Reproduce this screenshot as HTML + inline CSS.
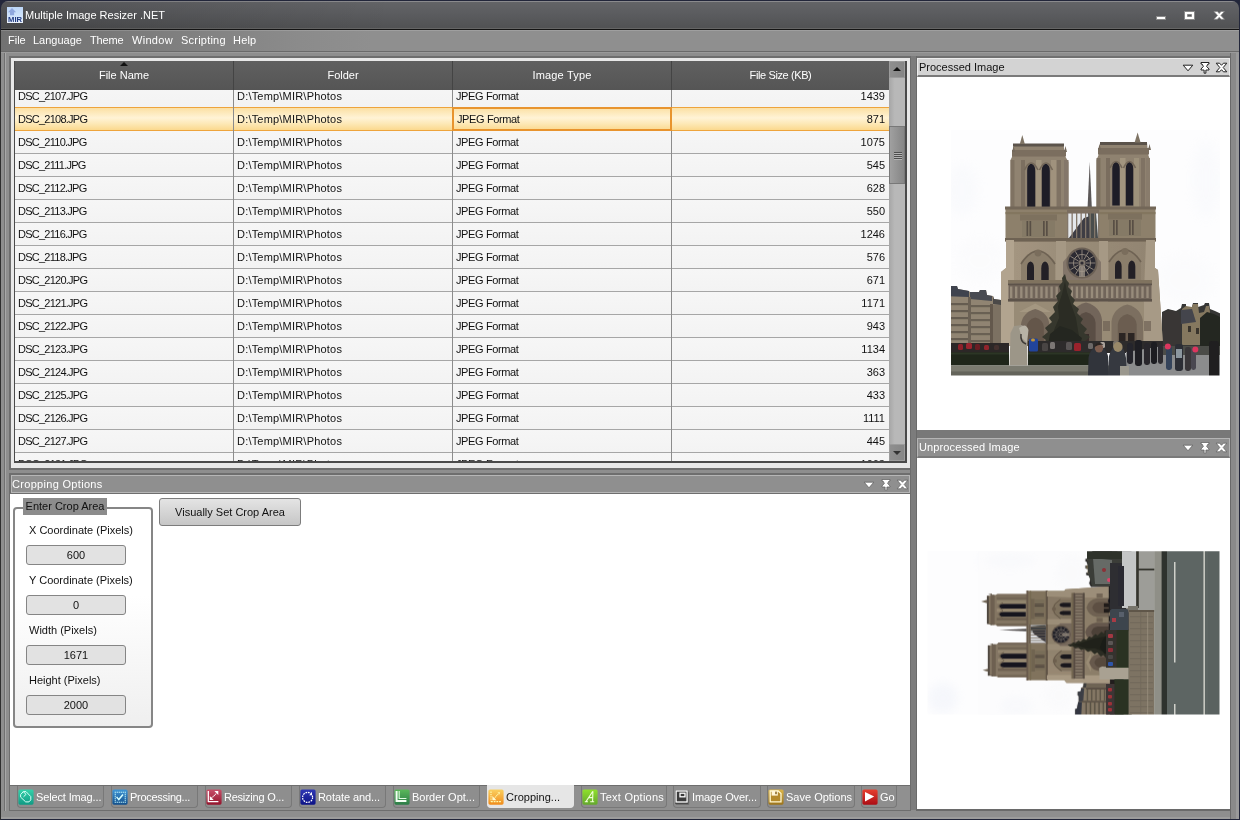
<!DOCTYPE html>
<html><head><meta charset="utf-8"><title>Multiple Image Resizer .NET</title>
<style>
*{box-sizing:border-box;margin:0;padding:0}
html,body{width:1240px;height:820px;overflow:hidden;background:#22263a;}
body{font-family:"Liberation Sans",sans-serif;font-size:11px;color:#111;position:relative}
#win{position:absolute;left:0;top:0;width:1240px;height:820px;overflow:hidden;will-change:transform}
#win div,#win svg{position:absolute}
/* title bar */
#titlebar{left:1px;top:1px;width:1238px;height:28px;border-radius:7px 7px 0 0;background:linear-gradient(90deg,rgba(0,0,0,.16) 0,rgba(0,0,0,.1) 10%,rgba(0,0,0,0) 32%),linear-gradient(#8a8a8d 0,#8a8a8d 1px,#636467 1px,#5c5d60 40%,#515254 27px,#656565 27px);}
#tline{left:1px;top:29px;width:1238px;height:1px;background:#141414}
#appicon{left:7px;top:7px;width:16px;height:16px}
#title{left:25px;top:8px;height:15px;line-height:15px;font-size:11px;color:#fff;white-space:nowrap;letter-spacing:0}
#wctl{left:1155px;top:10px}
/* menu */
#menubar{left:1px;top:30px;width:1238px;height:21px;background:linear-gradient(90deg,#727272 0,#787878 8%,#8b8b8b 24%,#8f8f8f 30%,#8f8f8f 100%);border-top:1px solid rgba(255,255,255,.15)}
.menu{top:33px;height:15px;line-height:15px;color:#fff;font-size:11px;white-space:nowrap}
#mline1{left:1px;top:51px;width:1238px;height:1px;background:#6a6a6a}
#mline2{left:1px;top:52px;width:1238px;height:1px;background:#9a9a9a}
#main{left:1px;top:53px;width:1238px;height:766px;background:#8e8e8e}
#lf1{left:0;top:30px;width:1px;height:790px;background:#2e2e2e}
#lf2{left:4px;top:53px;width:1px;height:765px;background:#707070}
#lf3{left:5px;top:53px;width:1px;height:765px;background:#a8a8a8}
/* grid */
#gridouter{left:11px;top:58px;width:899px;height:410px;background:#e8e8e8;box-shadow:0 0 0 2px #6e6e6e}
#gridinner{left:14px;top:61px;width:893px;height:402px;background:#4a4a4a;overflow:hidden}
#ghead{left:1px;top:0;width:874px;height:29px;background:linear-gradient(#606060,#555)}
.hc{top:0;height:28px;text-align:center;color:#fff;line-height:28px}
.hc span{position:relative}
.hs{top:0;width:1px;height:29px;background:#444}
.sort{position:absolute;left:50%;margin-left:-4px;top:1px;width:0;height:0;border-left:4px solid transparent;border-right:4px solid transparent;border-bottom:4px solid #111}
#gbody{left:1px;top:29px;width:874px;height:371px;background:#f4f4f4;overflow:hidden}
.row{left:0;width:874px;height:23px;border-bottom:1px solid #a6a6a6;background:linear-gradient(#f6f6f6,#f3f3f3);top:0}
#gbody .row{margin-top:-28px}
.c{position:absolute;top:0;height:22px;line-height:22px;white-space:nowrap;color:#111}
.c1{left:3px;letter-spacing:-0.75px}.c2{left:222px;letter-spacing:.2px}.c3{left:441px;letter-spacing:-.38px}.c4{right:4px;letter-spacing:0}
.row.sel{background:linear-gradient(#fbe0a4 0,#fff3d6 45%,#fde9b8 70%,#fbd98e 100%);border-bottom:1px solid #eea43c;box-shadow:0 -1px 0 #eea43c}
.vs{top:0;width:1px;height:372px;background:#8c8c8c}
#focus{left:437px;top:17px;width:220px;height:24px;border:2px solid #e8942e}
#sb{left:875px;top:0;width:16px;height:400px;background:linear-gradient(90deg,#a6a6a6,#b8b8b8 35%,#b8b8b8)}
.sbtn{left:0;width:16px;height:17px;background:linear-gradient(90deg,#8f8f8f,#868686);border:1px solid #9c9c9c}
.up{position:absolute;left:3px;top:5px;border-left:4px solid transparent;border-right:4px solid transparent;border-bottom:4.5px solid #111}
.down{position:absolute;left:3px;top:6px;border-left:4px solid transparent;border-right:4px solid transparent;border-top:4.5px solid #333}
#thumb{left:0;top:65px;width:16px;height:58px;background:linear-gradient(90deg,#a0a0a0,#858585);border:1px solid #787878}
#thumb b{position:absolute;left:3.5px;width:8px;height:1px;background:#4e4e4e;box-shadow:0 1px 0 #b4b4b4}
#thumb b:nth-child(1){top:25px}#thumb b:nth-child(2){top:27px}#thumb b:nth-child(3){top:29px}#thumb b:nth-child(4){top:31px}
/* cropping */
#crophead{left:9px;top:473px;width:903px;height:21px;background:#8f8f8f;border:2px solid #6e6e6e;border-bottom:1px solid #6e6e6e;box-shadow:inset 0 0 0 1px #b6b6b6}
#lf4{left:9px;top:494px;width:1px;height:317px;background:#6e6e6e}
#crophead span{left:1px!important;top:2px!important}
#crophead .pi{top:3px}
#crophead span,#p1head span,#p2head span{position:absolute;left:1px;top:1px;line-height:15px;font-size:11px;white-space:nowrap}
#crophead span,#p2head span{color:#fff}
.pi{top:2px}
#cropbody{left:10px;top:494px;width:901px;height:291px;background:#fff}
#gb{left:3px;top:13px;width:140px;height:221px;border:2px solid #868686;border-radius:4px;background:linear-gradient(#fff 0,#fff 40%,#efefef 100%)}
#gblabel{left:13px;top:4px;width:84px;height:17px;background:#8c8c8c;line-height:16px;text-align:center;color:#111;white-space:nowrap}
.lbl{left:19px;height:14px;line-height:14px;white-space:nowrap;color:#111}
.inp{left:16px;width:100px;height:20px;border:1px solid #858585;border-radius:3px;background:#e2e2e2;text-align:center;line-height:18px;color:#111}
#vbtn{left:149px;top:4px;width:142px;height:28px;border:1px solid #7c7c7c;border-radius:3px;background:linear-gradient(#e4e4e4,#d2d2d2 60%,#c6c6c6);text-align:center;line-height:26px;color:#111}
/* tabs */
#tabbar{left:10px;top:785px;width:901px;height:26px;background:#909090;border-top:1px solid #6e6e6e;border-bottom:1px solid #6e6e6e}
.tab{top:0;height:22px;width:87px;border:1px solid #787878;border-top:none;border-radius:0 0 4px 4px;background:#8e8e8e}
.tab.act{background:#e6e6e6;border-color:#e6e6e6;top:-1px;height:23px}
.tab.act svg{top:4px}
.tab.act span{top:5px}
.tab svg{left:0px;top:3px}
.tab span{position:absolute;left:18px;top:4px;line-height:15px;color:#fff;white-space:nowrap}
.tab.act span{color:#111}
#botband{left:1px;top:811px;width:1238px;height:8px;background:linear-gradient(#8e8e8e 0,#8e8e8e 6px,#9c9c9c 6px)}
#p2bot{left:916px;top:809px;width:315px;height:2px;background:#6a6a6a}
/* right */
#vsplit{left:910px;top:56px;width:7px;height:754px;background:#7c7c7c;border-left:1px solid #6c6c6c;border-right:1px solid #6a6a6a}
#hsplit{left:917px;top:430px;width:313px;height:8px;background:#787878}
#p1head{left:917px;top:58px;width:313px;height:19px;background:#d3d3d3;border:1px solid #ececec;border-bottom:2px solid #7a7a7a;box-shadow:0 -2px 0 #707070}
#p1head span{color:#111}
#p1body{left:917px;top:77px;width:313px;height:353px;background:#fff;overflow:hidden}
#p2head{left:917px;top:438px;width:313px;height:20px;background:#8f8f8f;border:1px solid #b4b4b4;border-bottom:2px solid #7a7a7a}
#p2body{left:917px;top:458px;width:313px;height:351px;background:#fff;overflow:hidden}
#rf{left:1230px;top:53px;width:9px;height:766px;background:linear-gradient(90deg,#8a8a8a 0,#8a8a8a 5px,#9a9a9a 5px);border-left:1px solid #6a6a6a}

.row.sel .c3{left:442px}

</style></head>
<body>
<div id="win">
  <div id="titlebar"></div>
  <div id="tline"></div>
  <div id="appicon"><svg width="16" height="16" viewBox="0 0 16 16"><defs><linearGradient id="ai" x1="0" y1="0" x2="0" y2="1"><stop offset="0" stop-color="#bcd6f7"/><stop offset=".55" stop-color="#cfe2fa"/><stop offset="1" stop-color="#eef4fd"/></linearGradient></defs><rect width="16" height="16" fill="url(#ai)"/><path d="M5 1.1 L9.1 5.2 H7.1 V8.2 H3 V5.2 H1 Z" fill="#8fa7dd"/><text x="1.1" y="14.9" font-family="Liberation Sans, sans-serif" font-weight="bold" font-size="7.8" fill="#1f3a82" textLength="14" lengthAdjust="spacingAndGlyphs">MIR</text></svg></div>
  <div id="title">Multiple Image Resizer .NET</div>
  <svg id="wctl" width="80" height="14" viewBox="0 0 80 14">
    <rect x="1.5" y="6.5" width="9" height="3" fill="#fff" stroke="#8a8a8a" stroke-width="1"/>
    <path d="M29.5 1.5 h10 v8 h-10 Z M32.5 4.5 v2 h4 v-2 Z" fill="#fff" fill-rule="evenodd" stroke="#8a8a8a" stroke-width="1"/>
    <path d="M59 1.5 h3.4 l1.8 2 l1.8 -2 h3.4 l-3.5 3.9 l3.5 3.9 h-3.4 l-1.8 -2 l-1.8 2 h-3.4 l3.5 -3.9 Z" fill="#fff" stroke="#8a8a8a" stroke-width="0.8"/>
  </svg>
  <div id="menubar"></div>
  <div class="menu" style="left:8px">File</div>
  <div class="menu" style="left:33px">Language</div>
  <div class="menu" style="left:90px;letter-spacing:-.15px">Theme</div>
  <div class="menu" style="left:132px;letter-spacing:.3px">Window</div>
  <div class="menu" style="left:181px;letter-spacing:.22px">Scripting</div>
  <div class="menu" style="left:233px;letter-spacing:.2px">Help</div>
  <div id="mline1"></div><div id="mline2"></div>
  <div id="main"></div>
  <div id="lf1"></div><div id="lf2"></div><div id="lf3"></div><div id="lf4"></div>

  <!-- GRID -->
  <div id="gridouter"></div>
  <div id="gridinner">
    <div id="ghead">
      <div class="hc" style="left:0;width:218px"><span>File Name</span><i class="sort"></i></div>
      <div class="hc" style="left:219px;width:218px"><span>Folder</span></div>
      <div class="hc" style="left:438px;width:218px"><span style="letter-spacing:.19px">Image Type</span></div>
      <div class="hc" style="left:657px;width:217px"><span style="letter-spacing:-.39px">File Size (KB)</span></div>
      <div class="hs" style="left:218px"></div><div class="hs" style="left:437px"></div><div class="hs" style="left:656px"></div>
    </div>
    <div id="gbody">
<div class="row" style="top:23px"><span class="c c1">DSC_2107.JPG</span><span class="c c2">D:\Temp\MIR\Photos</span><span class="c c3">JPEG Format</span><span class="c c4">1439</span></div>
<div class="row sel" style="top:46px"><span class="c c1">DSC_2108.JPG</span><span class="c c2">D:\Temp\MIR\Photos</span><span class="c c3">JPEG Format</span><span class="c c4">871</span></div>
<div class="row" style="top:69px"><span class="c c1">DSC_2110.JPG</span><span class="c c2">D:\Temp\MIR\Photos</span><span class="c c3">JPEG Format</span><span class="c c4">1075</span></div>
<div class="row" style="top:92px"><span class="c c1">DSC_2111.JPG</span><span class="c c2">D:\Temp\MIR\Photos</span><span class="c c3">JPEG Format</span><span class="c c4">545</span></div>
<div class="row" style="top:115px"><span class="c c1">DSC_2112.JPG</span><span class="c c2">D:\Temp\MIR\Photos</span><span class="c c3">JPEG Format</span><span class="c c4">628</span></div>
<div class="row" style="top:138px"><span class="c c1">DSC_2113.JPG</span><span class="c c2">D:\Temp\MIR\Photos</span><span class="c c3">JPEG Format</span><span class="c c4">550</span></div>
<div class="row" style="top:161px"><span class="c c1">DSC_2116.JPG</span><span class="c c2">D:\Temp\MIR\Photos</span><span class="c c3">JPEG Format</span><span class="c c4">1246</span></div>
<div class="row" style="top:184px"><span class="c c1">DSC_2118.JPG</span><span class="c c2">D:\Temp\MIR\Photos</span><span class="c c3">JPEG Format</span><span class="c c4">576</span></div>
<div class="row" style="top:207px"><span class="c c1">DSC_2120.JPG</span><span class="c c2">D:\Temp\MIR\Photos</span><span class="c c3">JPEG Format</span><span class="c c4">671</span></div>
<div class="row" style="top:230px"><span class="c c1">DSC_2121.JPG</span><span class="c c2">D:\Temp\MIR\Photos</span><span class="c c3">JPEG Format</span><span class="c c4">1171</span></div>
<div class="row" style="top:253px"><span class="c c1">DSC_2122.JPG</span><span class="c c2">D:\Temp\MIR\Photos</span><span class="c c3">JPEG Format</span><span class="c c4">943</span></div>
<div class="row" style="top:276px"><span class="c c1">DSC_2123.JPG</span><span class="c c2">D:\Temp\MIR\Photos</span><span class="c c3">JPEG Format</span><span class="c c4">1134</span></div>
<div class="row" style="top:299px"><span class="c c1">DSC_2124.JPG</span><span class="c c2">D:\Temp\MIR\Photos</span><span class="c c3">JPEG Format</span><span class="c c4">363</span></div>
<div class="row" style="top:322px"><span class="c c1">DSC_2125.JPG</span><span class="c c2">D:\Temp\MIR\Photos</span><span class="c c3">JPEG Format</span><span class="c c4">433</span></div>
<div class="row" style="top:345px"><span class="c c1">DSC_2126.JPG</span><span class="c c2">D:\Temp\MIR\Photos</span><span class="c c3">JPEG Format</span><span class="c c4">1111</span></div>
<div class="row" style="top:368px"><span class="c c1">DSC_2127.JPG</span><span class="c c2">D:\Temp\MIR\Photos</span><span class="c c3">JPEG Format</span><span class="c c4">445</span></div>
<div class="row" style="top:391px"><span class="c c1">DSC_2131.JPG</span><span class="c c2">D:\Temp\MIR\Photos</span><span class="c c3">JPEG Format</span><span class="c c4">1063</span></div>
      <div class="vs" style="left:218px"></div><div class="vs" style="left:437px"></div><div class="vs" style="left:656px"></div>
      <div id="focus"></div>
    </div>
    <div id="sb">
      <div class="sbtn" style="top:0"><i class="up"></i></div>
      <div id="thumb"><b></b><b></b><b></b><b></b></div>
      <div class="sbtn" style="bottom:0"><i class="down"></i></div>
    </div>
  </div>

  <!-- CROPPING PANEL -->
  <div id="crophead"><span style="letter-spacing:.31px">Cropping Options</span>
    <svg class="pi" style="left:852px" width="46" height="14" viewBox="0 0 46 14">
      <path d="M1.2 4.2 h9.6 l-4.8 5.6 Z" fill="#fff" stroke="#5a5a5a" stroke-width="0.7"/>
      <path d="M19 1.5 H27 V3 H26 L24.6 5.4 L27 8 V9 H23.9 V12.2 H22.1 V9 H19 V8 L21.4 5.4 L20 3 H19 Z" fill="#fff" stroke="#5a5a5a" stroke-width="0.7"/>
      <path d="M34.2 2.2 h3.4 l1.9 2.1 l1.9 -2.1 h3.4 l-3.6 4.3 l3.6 4.3 h-3.4 l-1.9 -2.1 l-1.9 2.1 h-3.4 l3.6 -4.3 Z" fill="#fff" stroke="#5a5a5a" stroke-width="0.7"/>
    </svg>
  </div>
  <div id="cropbody">
    <div id="gb"></div>
    <div id="gblabel">Enter Crop Area</div>
    <div class="lbl" style="top:29px">X Coordinate (Pixels)</div>
    <div class="inp" style="top:51px">600</div>
    <div class="lbl" style="top:79px">Y Coordinate (Pixels)</div>
    <div class="inp" style="top:101px">0</div>
    <div class="lbl" style="top:129px">Width (Pixels)</div>
    <div class="inp" style="top:151px">1671</div>
    <div class="lbl" style="top:179px">Height (Pixels)</div>
    <div class="inp" style="top:201px">2000</div>
    <div id="vbtn">Visually Set Crop Area</div>
  </div>
  <div id="tabbar">
<div class="tab" style="left:7px;width:87px"><svg width="16" height="16" viewBox="0 0 16 16"><defs><linearGradient id="g1" x1="0" y1="0" x2="0" y2="1"><stop offset="0" stop-color="#34d2aa"/><stop offset="1" stop-color="#109a84"/></linearGradient></defs><rect x="0.4" y="0.5" width="15.2" height="15.2" rx="1.6" fill="url(#g1)"/><path d="M5.3 2.6 H8 L12.8 7.6 V10.9 L10.9 12.9 H7.7 L2.6 8.1 V5.6 Z M8 5.4 L5.5 7.8 M5.3 2.6 L8 5.4" fill="none" stroke="#d8fff8" stroke-width="1" stroke-linejoin="miter"/></svg><span style="letter-spacing:-0.14px">Select Imag...</span></div>
<div class="tab" style="left:101px;width:87px"><svg width="16" height="16" viewBox="0 0 16 16"><defs><linearGradient id="g2" x1="0" y1="0" x2="0" y2="1"><stop offset="0" stop-color="#3f96d6"/><stop offset="1" stop-color="#124f8c"/></linearGradient></defs><rect x="0.4" y="0.5" width="15.2" height="15.2" rx="1.6" fill="url(#g2)"/><g fill="#d0ffff"><rect x="2.7" y="2.7" width="1.1" height="1.1"/><rect x="2.7" y="12.7" width="1.1" height="1.1"/><rect x="4.7" y="2.7" width="1.1" height="1.1"/><rect x="4.7" y="12.7" width="1.1" height="1.1"/><rect x="2.7" y="4.7" width="1.1" height="1.1"/><rect x="12.7" y="4.7" width="1.1" height="1.1"/><rect x="6.7" y="2.7" width="1.1" height="1.1"/><rect x="6.7" y="12.7" width="1.1" height="1.1"/><rect x="2.7" y="6.7" width="1.1" height="1.1"/><rect x="12.7" y="6.7" width="1.1" height="1.1"/><rect x="8.7" y="2.7" width="1.1" height="1.1"/><rect x="8.7" y="12.7" width="1.1" height="1.1"/><rect x="2.7" y="8.7" width="1.1" height="1.1"/><rect x="12.7" y="8.7" width="1.1" height="1.1"/><rect x="10.7" y="2.7" width="1.1" height="1.1"/><rect x="10.7" y="12.7" width="1.1" height="1.1"/><rect x="2.7" y="10.7" width="1.1" height="1.1"/><rect x="12.7" y="10.7" width="1.1" height="1.1"/><rect x="12.7" y="2.7" width="1.1" height="1.1"/><rect x="12.7" y="12.7" width="1.1" height="1.1"/></g><path d="M4.6 7.9 L6.8 10.6 L11 5.6" fill="none" stroke="#d8ffff" stroke-width="1.5"/></svg><span style="letter-spacing:-0.28px">Processing...</span></div>
<div class="tab" style="left:195px;width:87px"><svg width="16" height="16" viewBox="0 0 16 16"><defs><linearGradient id="g3" x1="0" y1="0" x2="0" y2="1"><stop offset="0" stop-color="#c8506a"/><stop offset="1" stop-color="#94142c"/></linearGradient></defs><rect x="0.4" y="0.5" width="15.2" height="15.2" rx="1.6" fill="url(#g3)"/><path d="M2.3 2 V12.6 H12.4" fill="none" stroke="#fff" stroke-width="1.3"/><path d="M8.4 2 H12.3 V6 Z M3.8 7 V10.9 H7.7 Z" fill="#fff"/><path d="M5.6 9.2 L10.4 4.2" stroke="#fff" stroke-width="1.1" stroke-dasharray="1 0.7"/></svg><span style="letter-spacing:-0.23px">Resizing O...</span></div>
<div class="tab" style="left:289px;width:87px"><svg width="16" height="16" viewBox="0 0 16 16"><defs><linearGradient id="g4" x1="0" y1="0" x2="0" y2="1"><stop offset="0" stop-color="#3038b4"/><stop offset="1" stop-color="#0c1286"/></linearGradient></defs><rect x="0.4" y="0.5" width="15.2" height="15.2" rx="1.6" fill="url(#g4)"/><circle cx="7.6" cy="8.4" r="5" fill="none" stroke="#fff" stroke-width="1.2" stroke-dasharray="1.7 0.9"/><path d="M9 5.8 L11.8 3 V5.8 Z" fill="#fff"/><rect x="9" y="4.6" width="3.4" height="1.6" fill="#2a30a8"/><path d="M9.2 6.2 L12 3.2 V6.2 Z" fill="#fff"/></svg><span style="letter-spacing:-0.08px">Rotate and...</span></div>
<div class="tab" style="left:383px;width:87px"><svg width="16" height="16" viewBox="0 0 16 16"><defs><linearGradient id="g5" x1="0" y1="0" x2="0" y2="1"><stop offset="0" stop-color="#5ab85a"/><stop offset="1" stop-color="#2c7c48"/></linearGradient></defs><rect x="0.4" y="0.5" width="15.2" height="15.2" rx="1.6" fill="url(#g5)"/><path d="M1.6 1.9 H3.6 V11 H12.4 V13 H1.6 Z" fill="#f4fff4"/><path d="M4.6 1.9 H5.7 V8.9 H12.4 V10 H4.6 Z" fill="#e4ffe4"/></svg><span style="letter-spacing:0px">Border Opt...</span></div>
<div class="tab act" style="left:477px;width:87px"><svg width="16" height="16" viewBox="0 0 16 16"><defs><linearGradient id="g6" x1="0" y1="0" x2="0" y2="1"><stop offset="0" stop-color="#fad060"/><stop offset="1" stop-color="#f08c1c"/></linearGradient></defs><rect x="0.4" y="0.5" width="15.2" height="15.2" rx="1.6" fill="url(#g6)"/><path d="M3 2.6 V12.6" stroke="#fffbb0" stroke-width="1.2" stroke-dasharray="1.3 1"/><path d="M3 12.7 H13.6" stroke="#fffbb0" stroke-width="1.2" stroke-dasharray="1.8 0.9"/><path d="M6 9.6 L11.6 3.6" stroke="#fffbb0" stroke-width="1.1" stroke-dasharray="1 0.7"/><path d="M4.4 7 V11.2 H8.4 Z" fill="#fffbd0"/><path d="M9.4 3 H12 V5.8 Z" fill="#ffe890"/></svg><span style="letter-spacing:0.02px">Cropping...</span></div>
<div class="tab" style="left:571px;width:86px"><svg width="16" height="16" viewBox="0 0 16 16"><defs><linearGradient id="g7" x1="0" y1="0" x2="0" y2="1"><stop offset="0" stop-color="#8fe02c"/><stop offset="1" stop-color="#64a82e"/></linearGradient></defs><rect x="0.4" y="0.5" width="15.2" height="15.2" rx="1.6" fill="url(#g7)"/><path d="M10.8 2.2 L4 12.6 M10.9 2.2 L10.6 12.6 M6.4 8.6 H10.6 M2.8 12.7 H6 M8.2 12.7 H12.2" fill="none" stroke="#f0ffd8" stroke-width="1.1"/></svg><span style="letter-spacing:0.24px">Text Options</span></div>
<div class="tab" style="left:663px;width:88px"><svg width="16" height="16" viewBox="0 0 16 16"><rect x="1.6" y="3" width="13.6" height="13" rx="1" fill="#5a5a5a" opacity=".6"/><rect x="1.2" y="1.3" width="13" height="13.4" fill="#3a3a3a"/><rect x="2.1" y="2" width="11" height="11" fill="#3c3c3c" stroke="#fff" stroke-width="1.3"/><rect x="6" y="4.2" width="5" height="3.6" fill="#3a3a3a" stroke="#fff" stroke-width="1.3"/></svg><span style="letter-spacing:-0.08px">Image Over...</span></div>
<div class="tab" style="left:757px;width:88px"><svg width="16" height="16" viewBox="0 0 16 16"><defs><linearGradient id="g9" x1="0" y1="0" x2="0" y2="1"><stop offset="0" stop-color="#dcb448"/><stop offset="1" stop-color="#9c741c"/></linearGradient></defs><rect x="0.4" y="0.5" width="15.2" height="15.2" rx="1.6" fill="url(#g9)"/><path d="M2.2 2 H10.2 L13 4.6 V12.9 H2.2 Z" fill="#b48a2c" stroke="#fff8d0" stroke-width="1.3"/><rect x="3.6" y="1.8" width="6.2" height="4.8" fill="#fff6d8"/><rect x="7.2" y="2.6" width="1.6" height="2.6" fill="#8a6a28"/></svg><span style="letter-spacing:0px">Save Options</span></div>
<div class="tab" style="left:851px;width:36px"><svg width="16" height="16" viewBox="0 0 16 16"><defs><linearGradient id="g10" x1="0" y1="0" x2="0" y2="1"><stop offset="0" stop-color="#e64030"/><stop offset="1" stop-color="#ac0c14"/></linearGradient></defs><rect x="0.4" y="0.5" width="15.2" height="15.2" rx="1.6" fill="url(#g10)"/><path d="M3 3 V12.4 L12.2 7.6 Z" fill="#fff"/></svg><span style="letter-spacing:-0.09px">Go</span></div>
  </div>
  <div id="botband"></div><div id="p2bot"></div>

  <!-- RIGHT PANELS -->
  <div id="vsplit"></div><div id="hsplit"></div>
  <div id="p1head"><span>Processed Image</span>
    <svg class="pi" style="left:264px" width="46" height="14" viewBox="0 0 46 14">
      <path d="M1.2 4.2 h9.6 l-4.8 5.6 Z" fill="#fff" stroke="#222" stroke-width="1"/>
      <path d="M19 1.5 H27 V3 H26 L24.6 5.4 L27 8 V9 H23.9 V12.2 H22.1 V9 H19 V8 L21.4 5.4 L20 3 H19 Z" fill="#fff" stroke="#222" stroke-width="1"/>
      <path d="M34.2 2.2 h3.4 l1.9 2.1 l1.9 -2.1 h3.4 l-3.6 4.3 l3.6 4.3 h-3.4 l-1.9 -2.1 l-1.9 2.1 h-3.4 l3.6 -4.3 Z" fill="#fff" stroke="#222" stroke-width="1"/>
    </svg>
  </div>
  <div id="p1body"><svg width="313" height="353" viewBox="917 77 313 353"><defs><filter id="b1" x="-5%" y="-5%" width="110%" height="110%" color-interpolation-filters="sRGB"><feGaussianBlur stdDeviation="0.45"/><feComponentTransfer><feFuncR type="gamma" exponent="1.2"/><feFuncG type="gamma" exponent="1.2"/><feFuncB type="gamma" exponent="1.18"/></feComponentTransfer></filter><filter id="b2" x="-20%" y="-20%" width="140%" height="140%"><feGaussianBlur stdDeviation="6"/></filter><filter id="b3" x="-10%" y="-10%" width="120%" height="120%"><feGaussianBlur stdDeviation="1.1"/></filter><linearGradient id="st" x1="0" y1="0" x2="1" y2="0"><stop offset="0" stop-color="#b2a591"/><stop offset=".5" stop-color="#a69a86"/><stop offset="1" stop-color="#a09480"/></linearGradient><clipPath id="pc1"><rect x="951" y="130" width="269" height="245.5"/></clipPath></defs><g clip-path="url(#pc1)"><g id="scene"><rect x="946" y="128" width="280" height="250" fill="#fdfdfe"/><g filter="url(#b2)" opacity=".13"><ellipse cx="962" cy="190" rx="16" ry="26" fill="#e2e8f4"/><ellipse cx="1206" cy="180" rx="14" ry="40" fill="#e6ebf5"/><ellipse cx="1185" cy="280" rx="30" ry="25" fill="#eef0f4"/><ellipse cx="980" cy="260" rx="25" ry="22" fill="#f0f1f4"/></g><g filter="url(#b1)"><path d="M946 286 L957 286 L958 289 L969 291 L970 292 L979 292 L980 290 L986 290 L987 295 L993 296 L994 299 L1001 300 L1001 346 L946 346 Z" fill="#9f9481"/><path d="M946 286 L957 286 L958 289 L969 291 L969 297 L946 296 Z" fill="#50545e"/><path d="M970 292 L979 292 L980 290 L986 290 L987 295 L992 296 L992 301 L970 299 Z" fill="#5a5c62"/><path d="M993 296 L994 299 L1001 300 L1001 305 L993 304 Z" fill="#5c5a58"/><rect x="946" y="303" width="23" height="2.2" fill="#6c6458" opacity=".8"/><rect x="971" y="305" width="20" height="2.2" fill="#6e665a" opacity=".75"/><rect x="946" y="310" width="23" height="2.2" fill="#6c6458" opacity=".8"/><rect x="971" y="312" width="20" height="2.2" fill="#6e665a" opacity=".75"/><rect x="946" y="317" width="23" height="2.2" fill="#6c6458" opacity=".8"/><rect x="971" y="319" width="20" height="2.2" fill="#6e665a" opacity=".75"/><rect x="946" y="324" width="23" height="2.2" fill="#6c6458" opacity=".8"/><rect x="971" y="326" width="20" height="2.2" fill="#6e665a" opacity=".75"/><rect x="946" y="331" width="23" height="2.2" fill="#6c6458" opacity=".8"/><rect x="971" y="333" width="20" height="2.2" fill="#6e665a" opacity=".75"/><rect x="946" y="338" width="23" height="2.2" fill="#6c6458" opacity=".8"/><rect x="971" y="340" width="20" height="2.2" fill="#6e665a" opacity=".75"/><rect x="968" y="297" width="3" height="48" fill="#7c7264"/><rect x="990" y="304" width="3" height="42" fill="#746a5c"/><rect x="993" y="305" width="8" height="41" fill="#8c8272"/><path d="M1162 312 L1168 309 L1176 311 L1181 308 L1182 304 L1186 304 L1186 307 L1192 307 L1193 303 L1198 303 L1198 307 L1204 305 L1205 303 L1209 303 L1210 309 L1215 311 L1226 316 L1226 376 L1162 376 Z" fill="#474744"/><path d="M1182 309 L1186 306 L1192 307 L1193 304 L1198 304 L1199 313 L1204 312 L1206 306 L1209 306 L1210 312 L1208 345 L1182 345 Z" fill="#95896f"/><path d="M1181 310 L1192 309 L1196 322 L1181 324 Z" fill="#55565c"/><path d="M1200 318 L1207 312 L1214 314 L1226 320 L1226 350 L1200 350 Z" fill="#33362e"/><path d="M1163 313 L1170 310 L1178 312 L1181 318 L1181 346 L1163 346 Z" fill="#4a4744"/><rect x="1188" y="326" width="3" height="6" fill="#4a443a"/><rect x="1196" y="328" width="3" height="6" fill="#4a443a"/><path d="M1006 240 L1155 240 L1155 268 L1158 270 L1163 345 L1001 346 L1001 272 L1006 268 Z" fill="url(#st)"/><rect x="1005.5" y="207.5" width="150" height="34" fill="#9c907b"/><path d="M1010.5 209 L1010.5 160 L1012 157 L1013.5 145 L1063.5 144 L1065 156 L1068.5 162 L1068.5 209 Z" fill="#9f9380"/><path d="M1096.5 208 L1096.5 160 L1098.5 155 L1100 143 L1147 142.5 L1148 154 L1150 160 L1150 208 Z" fill="#9e927f"/><rect x="1010.5" y="160" width="4" height="48" fill="#8f8372"/><rect x="1021" y="160" width="4" height="48" fill="#8c8070"/><rect x="1036" y="160" width="5.5" height="48" fill="#afa38e"/><rect x="1051" y="160" width="5" height="48" fill="#ada18c"/><rect x="1057" y="160" width="4" height="48" fill="#8f8373"/><rect x="1064" y="160" width="4.5" height="48" fill="#94887a"/><rect x="1096.5" y="158" width="4" height="49" fill="#8d8171"/><rect x="1106" y="158" width="4" height="49" fill="#8a7e6e"/><rect x="1120" y="158" width="5.5" height="49" fill="#afa38e"/><rect x="1134" y="158" width="5" height="49" fill="#aba08a"/><rect x="1141" y="158" width="4" height="49" fill="#8f8373"/><rect x="1146" y="158" width="4" height="49" fill="#988c7c"/><rect x="1013" y="143.5" width="51" height="3" fill="#6e665c"/><rect x="1012" y="150" width="54" height="6.5" fill="#8b7f6f"/><rect x="1100" y="142" width="47" height="3" fill="#6c645a"/><rect x="1098" y="148" width="51" height="6.5" fill="#8a7e6e"/><path d="M1022.3 135 L1024.8 144 L1019.8 144 Z" fill="#8e8474"/><path d="M1137.6 132.5 L1140.6 142.5 L1134.6 142.5 Z" fill="#8e8474"/><path d="M1012 152 l1.6 -6 l1.6 6Z M1064 152 l1.5 -6 l1.5 6Z M1098 150 l1.5 -6 l1.5 6Z M1148 150 l1.5 -6 l1.5 6Z" fill="#857a6c"/><path d="M1027.2 207.5 V170.7 Q1027.2 164.7 1031.2 163.5 Q1035.2 164.7 1035.2 170.7 V207.5 Z" fill="#2b2a35"/><path d="M1041.8 207.5 V170.7 Q1041.8 164.7 1045.8 163.5 Q1049.8 164.7 1049.8 170.7 V207.5 Z" fill="#2b2a35"/><path d="M1112.3 205.5 V168.66 Q1112.3 163.11 1116.0 162 Q1119.7 163.11 1119.7 168.66 V205.5 Z" fill="#2b2a35"/><path d="M1125.8 205.5 V168.66 Q1125.8 163.11 1129.5 162 Q1133.2 163.11 1133.2 168.66 V205.5 Z" fill="#2b2a35"/><path d="M1024.5 170 Q1031 156 1038 170 M1039.5 170 Q1046 156 1052.5 170 M1110 168 Q1116 155 1122 168 M1123.5 168 Q1129.5 155 1135.5 168" fill="none" stroke="#857969" stroke-width="1.6"/><path d="M1089.7 162 L1091.8 207 L1087.6 207 Z" fill="#6e6a68"/><rect x="1005" y="206.5" width="151" height="3" fill="#847868"/><rect x="1005" y="238" width="151" height="3.5" fill="#7f7363"/><rect x="1005.5" y="212" width="150" height="2.2" fill="#93876f"/><rect x="1067" y="210" width="32" height="28" fill="#e9ebee"/><path d="M1069 238 L1084 218 L1090 216 L1096 238 Z" fill="#4f4e54"/><path d="M1088 213 L1096 213 L1098 238 L1090 238 Z" fill="#5a5e5c"/><rect x="1067" y="210" width="1.3" height="28" fill="#93887a"/><rect x="1071.5" y="210" width="1.3" height="28" fill="#93887a"/><rect x="1076" y="210" width="1.3" height="28" fill="#93887a"/><rect x="1080.5" y="210" width="1.3" height="28" fill="#93887a"/><rect x="1085" y="210" width="1.3" height="28" fill="#93887a"/><rect x="1089.5" y="210" width="1.3" height="28" fill="#93887a"/><rect x="1094" y="210" width="1.3" height="28" fill="#93887a"/><rect x="1098" y="210" width="1.3" height="28" fill="#93887a"/><rect x="1067" y="209.5" width="32" height="4" fill="#8b7f70"/><rect x="1026.5" y="221" width="1.7" height="15" fill="#4d463e"/><rect x="1029.5" y="221" width="1.7" height="15" fill="#4d463e"/><rect x="1043" y="221" width="1.7" height="15" fill="#4d463e"/><rect x="1046" y="221" width="1.7" height="15" fill="#4d463e"/><rect x="1113" y="220" width="1.7" height="15" fill="#4d463e"/><rect x="1116" y="220" width="1.7" height="15" fill="#4d463e"/><rect x="1129" y="220" width="1.7" height="15" fill="#4d463e"/><rect x="1132" y="220" width="1.7" height="15" fill="#4d463e"/><rect x="1020" y="214.5" width="37" height="6" fill="#8a7e6c" opacity=".8"/><rect x="1108" y="213.5" width="34" height="6" fill="#8a7e6c" opacity=".8"/><rect x="1022" y="221" width="33" height="16" fill="#8f8371" opacity=".45"/><rect x="1109" y="220" width="32" height="16" fill="#8f8371" opacity=".45"/><rect x="1006" y="241" width="8" height="62" fill="#b9ad99" opacity="1"/><rect x="1056" y="241" width="10" height="62" fill="#b2a692" opacity="1"/><rect x="1099" y="241" width="9" height="62" fill="#b3a793" opacity="1"/><rect x="1146" y="241" width="9" height="62" fill="#b1a591" opacity="1"/><path d="M1001 272 L1006 268 L1006 240 L1014 240 L1014 345 L1001 346 Z" fill="#bdb19d"/><path d="M1146 240 L1155 240 L1155 268 L1158 270 L1163 345 L1142 345 Z" fill="#b4a894"/><path d="M1021 281 V262 Q1038 238 1055 262 V281 Z" fill="#9a8e7b"/><path d="M1109 280 V260 Q1125 238 1141 260 V280 Z" fill="#9a8e7b"/><path d="M1021 264 Q1038 238 1055 264 M1109 262 Q1125 238 1141 262" fill="none" stroke="#7f7363" stroke-width="1.6"/><path d="M1027 280.5 V267.8 Q1027 262.55 1030.5 261.5 Q1034 262.55 1034 267.8 V280.5 Z" fill="#312e33"/><path d="M1041.3 280.5 V268.16 Q1041.3 262.61 1045.0 261.5 Q1048.7 262.61 1048.7 268.16 V280.5 Z" fill="#312e33"/><path d="M1115 278.8 V266.44 Q1115 261.49 1118.3 260.5 Q1121.6 261.49 1121.6 266.44 V278.8 Z" fill="#312e33"/><path d="M1128.3 278.8 V266.8 Q1128.3 261.55 1131.8 260.5 Q1135.3 261.55 1135.3 266.8 V278.8 Z" fill="#312e33"/><circle cx="1038" cy="253" r="3.4" fill="#8a7e6c"/><circle cx="1125" cy="251.5" r="3.4" fill="#8a7e6c"/><path d="M1063 282 V262 Q1082 236 1101 262 V282 Z" fill="#93877a"/><circle cx="1082" cy="263" r="15.6" fill="#7d7266"/><circle cx="1082" cy="263" r="13.6" fill="#3a3941"/><line x1="1086.0" y1="263.0" x2="1095.4" y2="263.0" stroke="#9c9489" stroke-width="1"/><line x1="1085.5" y1="265.0" x2="1093.6" y2="269.7" stroke="#9c9489" stroke-width="1"/><line x1="1084.0" y1="266.5" x2="1088.7" y2="274.6" stroke="#9c9489" stroke-width="1"/><line x1="1082.0" y1="267.0" x2="1082.0" y2="276.4" stroke="#9c9489" stroke-width="1"/><line x1="1080.0" y1="266.5" x2="1075.3" y2="274.6" stroke="#9c9489" stroke-width="1"/><line x1="1078.5" y1="265.0" x2="1070.4" y2="269.7" stroke="#9c9489" stroke-width="1"/><line x1="1078.0" y1="263.0" x2="1068.6" y2="263.0" stroke="#9c9489" stroke-width="1"/><line x1="1078.5" y1="261.0" x2="1070.4" y2="256.3" stroke="#9c9489" stroke-width="1"/><line x1="1080.0" y1="259.5" x2="1075.3" y2="251.4" stroke="#9c9489" stroke-width="1"/><line x1="1082.0" y1="259.0" x2="1082.0" y2="249.6" stroke="#9c9489" stroke-width="1"/><line x1="1084.0" y1="259.5" x2="1088.7" y2="251.4" stroke="#9c9489" stroke-width="1"/><line x1="1085.5" y1="261.0" x2="1093.6" y2="256.3" stroke="#9c9489" stroke-width="1"/><circle cx="1082" cy="263" r="8.6" fill="none" stroke="#9c9489" stroke-width="1"/><circle cx="1082" cy="263" r="3.6" fill="#8e867c"/><circle cx="1082" cy="263" r="1.6" fill="#3e3c42"/><rect x="1079" y="266" width="6" height="11" fill="#b0a79a" opacity=".75"/><rect x="1008" y="280" width="144" height="3.6" fill="#90846f"/><rect x="1008.5" y="284" width="143" height="16" fill="#82766a"/><rect x="1010.0" y="286.5" width="2.4" height="11.5" fill="#a69b8a"/><rect x="1015.0" y="286.5" width="2.4" height="11.5" fill="#a69b8a"/><rect x="1020.1" y="286.5" width="2.4" height="11.5" fill="#a69b8a"/><rect x="1025.2" y="286.5" width="2.4" height="11.5" fill="#a69b8a"/><rect x="1030.2" y="286.5" width="2.4" height="11.5" fill="#a69b8a"/><rect x="1035.2" y="286.5" width="2.4" height="11.5" fill="#a69b8a"/><rect x="1040.3" y="286.5" width="2.4" height="11.5" fill="#a69b8a"/><rect x="1045.3" y="286.5" width="2.4" height="11.5" fill="#a69b8a"/><rect x="1050.4" y="286.5" width="2.4" height="11.5" fill="#a69b8a"/><rect x="1055.5" y="286.5" width="2.4" height="11.5" fill="#a69b8a"/><rect x="1060.5" y="286.5" width="2.4" height="11.5" fill="#a69b8a"/><rect x="1065.5" y="286.5" width="2.4" height="11.5" fill="#a69b8a"/><rect x="1070.6" y="286.5" width="2.4" height="11.5" fill="#a69b8a"/><rect x="1075.7" y="286.5" width="2.4" height="11.5" fill="#a69b8a"/><rect x="1080.7" y="286.5" width="2.4" height="11.5" fill="#a69b8a"/><rect x="1085.8" y="286.5" width="2.4" height="11.5" fill="#a69b8a"/><rect x="1090.8" y="286.5" width="2.4" height="11.5" fill="#a69b8a"/><rect x="1095.8" y="286.5" width="2.4" height="11.5" fill="#a69b8a"/><rect x="1100.9" y="286.5" width="2.4" height="11.5" fill="#a69b8a"/><rect x="1106.0" y="286.5" width="2.4" height="11.5" fill="#a69b8a"/><rect x="1111.0" y="286.5" width="2.4" height="11.5" fill="#a69b8a"/><rect x="1116.0" y="286.5" width="2.4" height="11.5" fill="#a69b8a"/><rect x="1121.1" y="286.5" width="2.4" height="11.5" fill="#a69b8a"/><rect x="1126.2" y="286.5" width="2.4" height="11.5" fill="#a69b8a"/><rect x="1131.2" y="286.5" width="2.4" height="11.5" fill="#a69b8a"/><rect x="1136.2" y="286.5" width="2.4" height="11.5" fill="#a69b8a"/><rect x="1141.3" y="286.5" width="2.4" height="11.5" fill="#a69b8a"/><rect x="1146.3" y="286.5" width="2.4" height="11.5" fill="#a69b8a"/><rect x="1008" y="283.4" width="144" height="1.8" fill="#6f655a"/><rect x="1008" y="299" width="144" height="2.6" fill="#6f655a"/><rect x="1014" y="302" width="130" height="44" fill="#a69a85"/><path d="M1019 312 L1035.2 303.5 L1051 312 Z" fill="#b1a590"/><path d="M1021 346 V324.675 Q1022.425 312.42 1035.25 309 Q1048.075 312.42 1049.5 324.675 V346 Z" fill="#85786a"/><path d="M1026.7 346 V326.955 Q1027.555 319.602 1035.25 317.55 Q1042.945 319.602 1043.8 326.955 V346 Z" fill="#75685a"/><path d="M1070 346 V320.1 Q1071.6 306.34 1086.0 302.5 Q1100.4 306.34 1102 320.1 V346 Z" fill="#83766a"/><path d="M1076.4 346 V322.6599999999999 Q1077.3600000000001 314.404 1086.0 312.1 Q1094.6399999999999 314.404 1095.6 322.6599999999999 V346 Z" fill="#6c6055"/><path d="M1111.5 346 V321.825 Q1113.075 308.28 1127.25 304.5 Q1141.425 308.28 1143 321.825 V346 Z" fill="#8c8070"/><path d="M1117.8 346 V324.345 Q1118.745 316.218 1127.25 313.95 Q1135.755 316.218 1136.7 324.345 V346 Z" fill="#7c6f60"/><rect x="1119" y="333" width="6.5" height="13" fill="#3a3430"/><rect x="1128" y="333" width="6.5" height="13" fill="#3a3430"/><rect x="1083" y="334" width="6" height="12" fill="#4a3c38"/><rect x="1103" y="321" width="7" height="10" fill="#8a7e6e"/><rect x="1144" y="321" width="7" height="10" fill="#8f8373"/><path d="M1065 274 L1066.5 280 L1069 283 L1068 287 L1072 291 L1070.5 295 L1075 300 L1073 304 L1079 309 L1077 313 L1083 319 L1080.5 323 L1087 329 L1084 333 L1090 337 L1085 341 L1086 346 L1043 346 L1046 340 L1042 337 L1048 332 L1045 328 L1052 322 L1049 318 L1055 312 L1053 307 L1058 301 L1056 296 L1060.5 291 L1059 286 L1062.5 282 L1062 278 Z" fill="#47483b"/><path d="M1065 281 L1067 292 L1071 304 L1076 318 L1079 336 L1058 340 L1054 330 L1059 318 L1058 306 L1062 294 Z" fill="#3a3c31"/><path d="M1050 334 L1060 326 L1072 330 L1082 338 L1080 345 L1048 345 Z" fill="#33352c"/><path d="M1009.5 365.5 L1010.5 333 L1014 326 L1022 325 L1027 330 L1027.5 365.5 Z" fill="#aaa496"/><path d="M1019 328 Q1026 322 1028.5 330 L1027 343 L1022 338 Z" fill="#c3beb2"/><path d="M1021 334 Q1020 342 1026 344" fill="none" stroke="#4e4a44" stroke-width="1.4"/><rect x="946" y="343" width="63" height="10" fill="#3b3634"/><rect x="1028" y="341" width="135" height="12" fill="#3d3a39"/><rect x="958" y="344" width="5" height="6" rx="1.5" fill="#9c2f38"/><rect x="966" y="343" width="6" height="6" rx="1.5" fill="#a8343c"/><rect x="975" y="344" width="5" height="6" rx="1.5" fill="#7a2a30"/><rect x="984" y="345" width="5" height="5" rx="1.5" fill="#a0323a"/><rect x="994" y="345" width="5" height="5" rx="1.5" fill="#54403c"/><rect x="1029" y="338.5" width="9" height="13" rx="1.5" fill="#2f55a8"/><rect x="1031" y="338.5" width="4" height="3" rx="1.5" fill="#caa24a"/><rect x="1042" y="343" width="6" height="8" rx="1.5" fill="#5a5654"/><rect x="1050" y="342" width="5" height="7" rx="1.5" fill="#8c8884"/><rect x="1066" y="342" width="6" height="8" rx="1.5" fill="#6a6664"/><rect x="1074" y="343" width="7" height="8" rx="1.5" fill="#a8303a"/><rect x="1088" y="343" width="5" height="6" rx="1.5" fill="#7e7a78"/><rect x="1100" y="342" width="5" height="6" rx="1.5" fill="#b8b0a8"/><rect x="1113" y="341" width="6" height="10" rx="1.5" fill="#8c8478"/><rect x="946" y="352.5" width="63" height="13" fill="#2d3526"/><rect x="1028" y="352.5" width="64" height="13" fill="#2d3526"/><rect x="946" y="352.5" width="63" height="2" fill="#3c4632"/><rect x="1028" y="352.5" width="64" height="2" fill="#3c4632"/><rect x="946" y="365.5" width="180" height="12.5" fill="#8b8b7f"/><rect x="946" y="371.5" width="180" height="6.5" fill="#75756b"/><path d="M1126 378 L1126 352 L1163 346 L1226 348 L1226 378 Z" fill="#9a9b9b"/><rect x="1163" y="346" width="63" height="9" fill="#5c5e58"/><rect x="1127" y="343" width="6" height="21" rx="2.4" fill="#34343a"/><rect x="1135" y="340" width="7" height="26" rx="2.4" fill="#2c2c30"/><rect x="1144" y="343" width="6" height="22" rx="2.4" fill="#38363a"/><rect x="1151" y="342" width="6" height="22" rx="2.4" fill="#2a2a2e"/><rect x="1158" y="344" width="5" height="20" rx="2.4" fill="#3c3a3e"/><rect x="1166" y="346" width="6" height="24" rx="2.4" fill="#44546a"/><rect x="1175" y="344" width="8" height="27" rx="2.4" fill="#3c3e44"/><rect x="1185" y="347" width="6" height="24" rx="2.4" fill="#4a4648"/><rect x="1191" y="348" width="5" height="22" rx="2.4" fill="#5a5860"/><rect x="1209" y="341" width="10" height="37" rx="2.4" fill="#2e2d2c"/><rect x="1176" y="349" width="6" height="9" fill="#9aa4aa"/><circle cx="1167.8" cy="346.4" r="3" fill="#e2476e"/><circle cx="1195.3" cy="349.6" r="3" fill="#e2476e"/><path d="M1088 376 L1088.5 358 Q1090 348 1098 346 Q1106 347 1108 356 L1109 376 Z" fill="#41444a"/><ellipse cx="1099" cy="348" rx="4.2" ry="4.6" fill="#8c6e5e"/><path d="M1094.5 346 Q1098 340 1103.5 345 Q1099 344 1094.5 347 Z" fill="#3a322e"/><path d="M1108 376 L1109 356 Q1112 346 1118 345 Q1125 347 1126 358 L1127 376 Z" fill="#474a50"/><ellipse cx="1118" cy="347" rx="4.6" ry="5" fill="#a89878"/><rect x="1120" y="366" width="9" height="10" fill="#a9a69c"/></g></g></g></svg></div>
  <div id="p2head"><span style="letter-spacing:.13px">Unprocessed Image</span>
    <svg class="pi" style="left:264px" width="46" height="14" viewBox="0 0 46 14">
      <path d="M1.2 4.2 h9.6 l-4.8 5.6 Z" fill="#fff" stroke="#5a5a5a" stroke-width="0.7"/>
      <path d="M19 1.5 H27 V3 H26 L24.6 5.4 L27 8 V9 H23.9 V12.2 H22.1 V9 H19 V8 L21.4 5.4 L20 3 H19 Z" fill="#fff" stroke="#5a5a5a" stroke-width="0.7"/>
      <path d="M34.2 2.2 h3.4 l1.9 2.1 l1.9 -2.1 h3.4 l-3.6 4.3 l3.6 4.3 h-3.4 l-1.9 -2.1 l-1.9 2.1 h-3.4 l3.6 -4.3 Z" fill="#fff" stroke="#5a5a5a" stroke-width="0.7"/>
    </svg>
  </div>
  <div id="p2body"><svg width="313" height="351" viewBox="917 458 313 351"><defs><clipPath id="pc2"><rect x="927.5" y="551.3" width="292" height="163.2"/></clipPath><filter id="b4" x="-5%" y="-5%" width="110%" height="110%"><feGaussianBlur stdDeviation="0.7"/></filter><filter id="b6" x="0" y="0" width="100%" height="100%" color-interpolation-filters="sRGB"><feComponentTransfer><feFuncR type="gamma" exponent="1.15"/><feFuncG type="gamma" exponent="1.15"/><feFuncB type="gamma" exponent="1.15"/></feComponentTransfer></filter><filter id="b5" x="-30%" y="-30%" width="160%" height="160%"><feGaussianBlur stdDeviation="5"/></filter></defs><g clip-path="url(#pc2)"><rect x="927" y="551" width="293" height="164" fill="#fdfdfe"/><g filter="url(#b5)" opacity=".28"><ellipse cx="997" cy="561" rx="18" ry="9" fill="#e2e9f6"/><ellipse cx="943" cy="698" rx="15" ry="15" fill="#e4eaf6"/><ellipse cx="1001" cy="709" rx="8" ry="5" fill="#e4eaf6"/></g><g filter="url(#b6)"><use href="#scene" transform="matrix(0 -0.596 0.6125 0 899.9 1279.5)"/></g><g filter="url(#b4)"><path d="M1087 551 L1126 551 L1126 586 L1092 586 L1088 572 Z" fill="#3a3d38"/><path d="M1093 558 L1112 560 L1112 584 L1095 584 Z" fill="#666a66"/><rect x="1087" y="551" width="40" height="8" fill="#2e312b"/><circle cx="1112" cy="566" r="2" fill="#d8456a"/><circle cx="1109" cy="580" r="2" fill="#d8456a"/><circle cx="1116" cy="573" r="2" fill="#a83040"/><circle cx="1104" cy="570" r="2" fill="#8c3038"/><rect x="1110" y="563" width="16" height="46" fill="#2e2e33"/><rect x="1122" y="551" width="15" height="57" fill="#c4c6c6"/><rect x="1118" y="566" width="6" height="40" fill="#2c2c31"/><rect x="1136" y="551" width="18.5" height="59.5" fill="#9d9d98"/><rect x="1136.2" y="551" width="2.6" height="57" fill="#34342f"/><rect x="1138" y="568.6" width="17" height="1.8" fill="#34342f"/><rect x="1128" y="606" width="10" height="4.5" fill="#77746c"/><rect x="1110" y="609" width="18.5" height="22" rx="2" fill="#3e444e"/><rect x="1112" y="618" width="4" height="4" fill="#a83a44"/><rect x="1119" y="612" width="5" height="5" fill="#59606c"/><rect x="1106" y="630" width="11" height="38" fill="#36312f"/><rect x="1108" y="634" width="5" height="4" rx="1" fill="#a23842"/><rect x="1108" y="641" width="5" height="4" rx="1" fill="#5b5754"/><rect x="1108" y="648" width="5" height="4" rx="1" fill="#8c2f38"/><rect x="1108" y="655" width="5" height="4" rx="1" fill="#4a4644"/><rect x="1108" y="662" width="5" height="4" rx="1" fill="#2f55a8"/><rect x="1116.5" y="630" width="12.2" height="38" fill="#2a3322"/><rect x="1099.5" y="667.7" width="29.2" height="11.8" fill="#a9a192"/><rect x="1114.4" y="679.4" width="14.3" height="36" fill="#2a3322"/><rect x="1106" y="684" width="8.6" height="31" fill="#3c3634"/><rect x="1108" y="688" width="4" height="3.4" rx="1" fill="#9c3038"/><rect x="1108" y="695" width="4" height="3.4" rx="1" fill="#9c3038"/><rect x="1108" y="702" width="4" height="3.4" rx="1" fill="#9c3038"/><rect x="1108" y="708" width="4" height="3.4" rx="1" fill="#9c3038"/><rect x="1128.7" y="610" width="25.8" height="105" fill="#7d7363"/><rect x="1128.7" y="610" width="25.8" height="2" fill="#5e564a"/><rect x="1130" y="616" width="23" height="1.2" fill="#6f665a" opacity=".7"/><rect x="1130" y="622" width="23" height="1.2" fill="#6f665a" opacity=".7"/><rect x="1130" y="628" width="23" height="1.2" fill="#6f665a" opacity=".7"/><rect x="1130" y="634" width="23" height="1.2" fill="#6f665a" opacity=".7"/><rect x="1130" y="640" width="23" height="1.2" fill="#6f665a" opacity=".7"/><rect x="1130" y="646" width="23" height="1.2" fill="#6f665a" opacity=".7"/><rect x="1130" y="652" width="23" height="1.2" fill="#6f665a" opacity=".7"/><rect x="1130" y="658" width="23" height="1.2" fill="#6f665a" opacity=".7"/><rect x="1130" y="664" width="23" height="1.2" fill="#6f665a" opacity=".7"/><rect x="1130" y="670" width="23" height="1.2" fill="#6f665a" opacity=".7"/><rect x="1130" y="676" width="23" height="1.2" fill="#6f665a" opacity=".7"/><rect x="1130" y="682" width="23" height="1.2" fill="#6f665a" opacity=".7"/><rect x="1130" y="688" width="23" height="1.2" fill="#6f665a" opacity=".7"/><rect x="1130" y="694" width="23" height="1.2" fill="#6f665a" opacity=".7"/><rect x="1130" y="700" width="23" height="1.2" fill="#6f665a" opacity=".7"/><rect x="1130" y="706" width="23" height="1.2" fill="#6f665a" opacity=".7"/><rect x="1130" y="712" width="23" height="1.2" fill="#6f665a" opacity=".7"/><rect x="1140" y="612" width="1.2" height="103" fill="#70675a" opacity=".6"/><rect x="1147" y="612" width="1.2" height="103" fill="#988e7e" opacity=".7"/><rect x="1154.2" y="551" width="8" height="164" fill="#8f8f87"/><rect x="1161.6" y="551" width="5.6" height="164" fill="#2f312f"/><rect x="1167" y="551" width="53" height="164" fill="#5d6563"/><rect x="1203.4" y="551" width="1.6" height="164" fill="#c6c7c0"/><rect x="1174" y="562" width="1.5" height="100.5" fill="#cfd0ca"/><rect x="1174" y="704" width="1.5" height="11" fill="#cfd0ca"/><rect x="1208" y="551" width="12" height="164" fill="#586060" opacity=".6"/></g></g></svg></div>
  <div id="rf"></div>
</div>
</body></html>
